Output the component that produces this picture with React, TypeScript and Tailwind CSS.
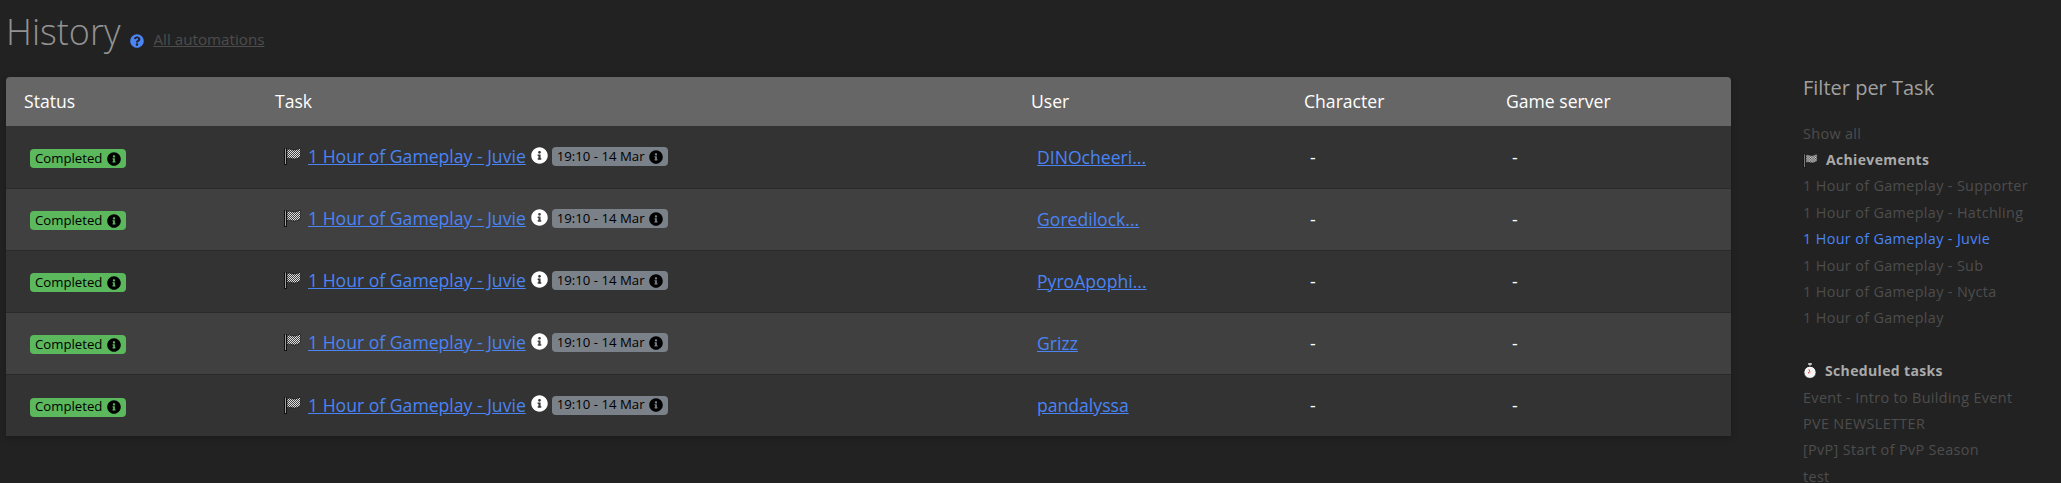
import { FaInfoCircle, FaQuestionCircle } from "react-icons/fa";

const rows = ["DINOcheeri...", "Goredilock...", "PyroApophi...", "Grizz", "pandalyssa"];

const achievements = [
  "1 Hour of Gameplay - Supporter",
  "1 Hour of Gameplay - Hatchling",
  "1 Hour of Gameplay - Juvie",
  "1 Hour of Gameplay - Sub",
  "1 Hour of Gameplay - Nycta",
  "1 Hour of Gameplay",
];

const scheduled = ["Event - Intro to Building Event", "PVE NEWSLETTER", "[PvP] Start of PvP Season", "test"];

function Flag({ className }: { className?: string }) {
  return (
    <svg viewBox="0 0 17 18" className={className}>
      <defs>
        <pattern id="checker" width="2" height="2" patternUnits="userSpaceOnUse">
          <rect width="2" height="2" fill="#e0e0e0" />
          <rect width="1" height="1" fill="#404040" />
          <rect x="1" y="1" width="1" height="1" fill="#404040" />
        </pattern>
      </defs>
      <path d="M0 1h3v17H0z" fill="#111" />
      <path d="M1 1.500h1v15.500H1z" fill="#9a9a9a" />
      <path d="M3 2.500c3-1.500 5 1 8 .5 2-.3 3.500-1 5.500-2v9c-2 1-4.500 2.300-6.500 2-2.500-.4-4.500-1.500-7 0z" fill="url(#checker)" stroke="#111" strokeWidth=".6" />
    </svg>
  );
}

function Stopwatch({ className }: { className?: string }) {
  return (
    <svg viewBox="0 0 16 18" className={className}>
      <rect x="6" y="0" width="4" height="2" fill="#ddd" />
      <rect x="7" y="2" width="2" height="2" fill="#999" />
      <circle cx="8" cy="10.500" r="7" fill="#f4f4f4" stroke="#111" strokeWidth="1" />
      <path d="M8 10.500 6.800 7" stroke="#d33" strokeWidth="1" />
      <circle cx="6.500" cy="11" r=".8" fill="#d33" />
    </svg>
  );
}

export default function App() {
  return (
    <div className="h-[483px] overflow-hidden bg-[#222222] font-['Open_Sans',sans-serif] flex">
      <div className="w-[1731px] pl-[6px] shrink-0">
        <div className="h-[77px] flex items-start pt-[7px]">
          <h1 className="text-[36px] leading-[49px] font-light text-[#929292]">History</h1>
          <FaQuestionCircle className="text-[#4a84f5] w-[14px] h-[14px] ml-[9px] mt-[27px]" />
          <a href="#" className="ml-[10px] mt-[20px] text-[15.2px] leading-[24px] text-[#4d4d4d] underline">
            All automations
          </a>
        </div>

        <table className="w-full table-fixed border-collapse shadow-[0_2px_6px_rgba(0,0,0,0.25)]">
          <colgroup>
            <col className="w-[251px]" />
            <col className="w-[774px]" />
            <col className="w-[255px]" />
            <col className="w-[202px]" />
            <col />
          </colgroup>
          <thead>
            <tr className="h-[49px] bg-[#666666] text-left text-white text-[17.6px]">
              <th className="font-normal pl-[18px] rounded-tl-[4px]">Status</th>
              <th className="font-normal pl-[18px] pr-0">Task</th>
              <th className="font-normal pl-0">User</th>
              <th className="font-normal pl-[18px]">Character</th>
              <th className="font-normal pl-[18px] rounded-tr-[4px]">Game server</th>
            </tr>
          </thead>
          <tbody>
            {rows.map((user, i) => (
              <tr key={user} className={`h-[62px] border-b border-[#2a2a2a] last:border-b-0 ${i % 2 === 0 ? "bg-[#333333]" : "bg-[#404040]"}`}>
                <td className="pl-[24px]">
                  <span className="inline-flex items-center h-[19px] px-[5px] rounded-[4px] bg-[#5cb85c] text-[13.2px] font-medium text-black">
                    Completed
                    <FaInfoCircle className="w-[14px] h-[14px] ml-[5px]" />
                  </span>
                </td>
                <td className="pl-[27px]">
                  <div className="flex items-center">
                    <Flag className="w-[17px] h-[18px] mr-[7px] -mt-[1px]" />
                    <a href="#" className="text-[17.6px] text-[#4a84f5] underline -mt-[1px]">
                      1 Hour of Gameplay - Juvie
                    </a>
                    <FaInfoCircle className="w-[17px] h-[17px] ml-[5px] mr-[4px] text-white -mt-[3px]" />
                    <span className="inline-flex items-center h-[19px] px-[5px] rounded-[4px] bg-[#7b8189] text-[13.2px] font-medium text-black">
                      19:10 - 14 Mar
                      <FaInfoCircle className="w-[14px] h-[14px] ml-[4px]" />
                    </span>
                  </div>
                </td>
                <td className="pl-[6px]">
                  <a href="#" className="text-[17.6px] text-[#4a84f5] underline">
                    {user}
                  </a>
                </td>
                <td className="pl-[24px] text-[17.6px] text-white">-</td>
                <td className="pl-[24px] text-[17.6px] text-white">-</td>
              </tr>
            ))}
          </tbody>
        </table>
      </div>

      <aside className="pl-[72px] pt-[72px] text-[14.4px] leading-[26.4px] tracking-[0.35px] text-[#4d4d4d]">
        <h2 className="text-[20px] leading-[32px] text-[#a0a0a0] mb-[16.5px] tracking-normal">Filter per Task</h2>
        <div>Show all</div>
        <div className="flex items-center font-bold text-[14px] text-[#aaaaaa]">
          <Flag className="w-[15px] h-[15px] mr-[8px]" />
          Achievements
        </div>
        {achievements.map((a) => (
          <div key={a} className={a.endsWith("Juvie") ? "text-[#4a84f5]" : undefined}>
            {a}
          </div>
        ))}
        <div className="flex items-center font-bold text-[14px] text-[#aaaaaa] mt-[26.4px]">
          <Stopwatch className="w-[14px] h-[16px] mr-[8px]" />
          Scheduled tasks
        </div>
        {scheduled.map((s) => (
          <div key={s}>{s}</div>
        ))}
      </aside>
    </div>
  );
}
